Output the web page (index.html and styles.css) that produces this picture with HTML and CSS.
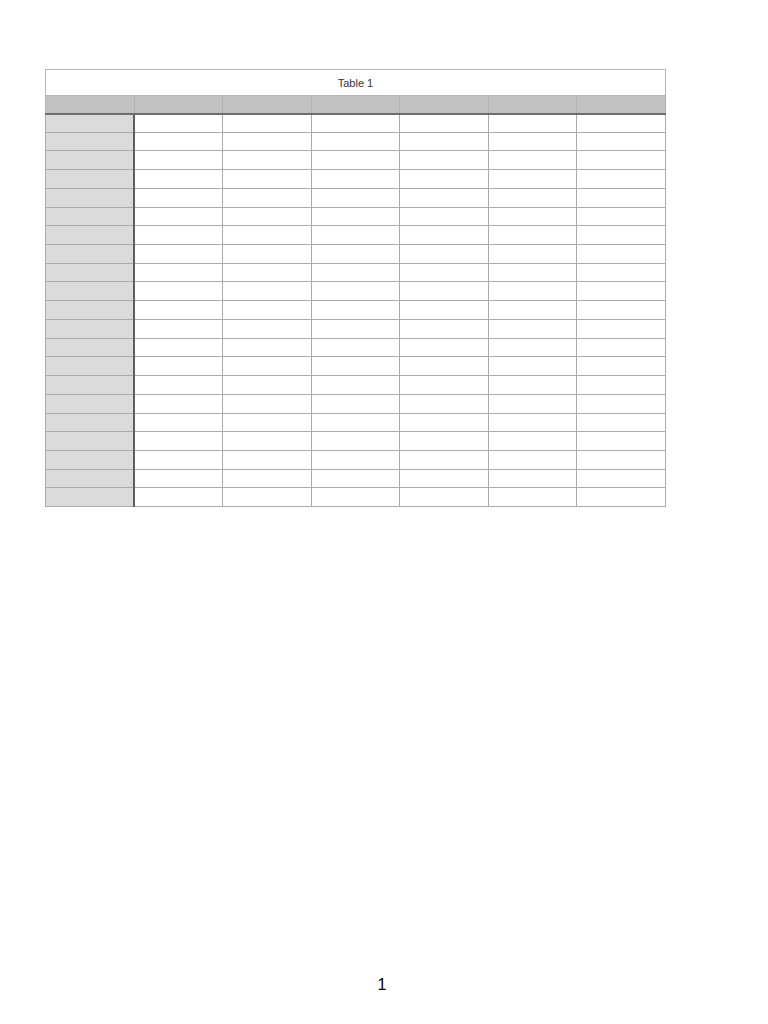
FILE: index.html
```html
<!DOCTYPE html>
<html>
<head>
<meta charset="utf-8">
<link rel="stylesheet" href="styles.css">
</head>
<body>
<div class="page">
  <table class="sheet">
    <thead>
      <tr class="title-row"><th colspan="7">Table 1</th></tr>
      <tr class="head-row"><th></th><th></th><th></th><th></th><th></th><th></th><th></th></tr>
    </thead>
    <tbody id="body"></tbody>
  </table>
  <div class="page-num">1</div>
</div>
<script>
  var tb = document.getElementById('body');
  for (var r = 0; r < 21; r++) {
    var tr = document.createElement('tr');
    for (var c = 0; c < 7; c++) {
      tr.appendChild(document.createElement(c === 0 ? 'th' : 'td'));
    }
    tb.appendChild(tr);
  }
</script>
</body>
</html>
```

FILE: styles.css
```css
html, body {
  margin: 0;
  padding: 0;
  background: #fff;
}
.page {
  height: 1024px;
  display: flex;
  flex-direction: column;
  padding: 69px 0 0 45px;
  box-sizing: border-box;
  font-family: "Liberation Sans", Arial, sans-serif;
}
.sheet {
  border-collapse: collapse;
  width: 621px;
  table-layout: fixed;
}
.sheet th, .sheet td {
  border: 1px solid #ababab;
  padding: 0;
  height: 18.72px;
  box-sizing: border-box;
}
.title-row th {
  height: 26px;
  font-size: 11px;
  font-weight: normal;
  color: #333;
  background: #fff;
  border-color: #b5b5b5;
}
.head-row th {
  height: 18px;
  background: #c0c1c0;
  border-color: #b0b1b0;
  border-bottom: 2px solid #6e6e6e;
}
.head-row th:first-child {
  border-left-color: #b5b5b5;
}
tbody th {
  background: #dbdbdb;
  border-right: 2px solid #5e5e5e;
  width: 88px;
}
tbody td:nth-child(2) {
  border-left: 2px solid #5e5e5e;
}
tbody td {
  background: #fff;
}
.page-num {
  margin-top: auto;
  margin-left: -45px;
  padding-bottom: 30px;
  text-align: center;
  font-size: 16px;
  color: #000;
  width: 768px;
  transform: translateX(-2px);
}
```
